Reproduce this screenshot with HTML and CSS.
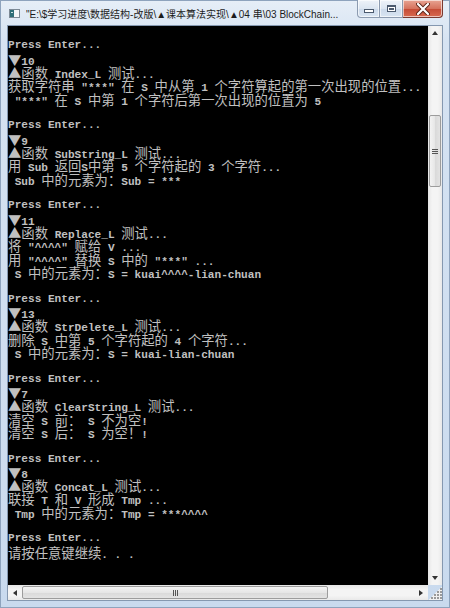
FILE: index.html
```html
<!DOCTYPE html>
<html lang="zh-CN">
  <head>
    <meta charset="UTF-8">
    <title>BlockChain</title>
    <link rel="stylesheet" href="styles.css">
  </head>
  <body>
    <div class="window">
      <div class="titlebar">
        <svg class="app-icon" width="11" height="9" viewBox="0 0 11 9">
          <rect x="0.5" y="0.5" width="10" height="8" fill="#f4f6f8" stroke="#7d8a96"/>
          <rect x="1" y="1" width="4" height="7" fill="#2f6f78"/>
          <rect x="2" y="3" width="2" height="1" fill="#cfe3e6"/>
        </svg>
        <span class="title">"E:\$学习进度\数据结构-改版\▲课本算法实现\▲04 串\03 BlockChain...</span>
        <div class="caption-btns">
          <div class="cbtn cbtn--min"><span class="ico-min"></span></div>
          <div class="cbtn cbtn--max"><span class="ico-max"></span></div>
          <div class="cbtn cbtn--close">
            <svg width="14" height="12" viewBox="0 0 14 12">
              <path d="M2 1 L12 11 M12 1 L2 11" stroke="#5a2418" stroke-width="4" stroke-linecap="round"/>
              <path d="M2 1 L12 11 M12 1 L2 11" stroke="#ffffff" stroke-width="2.2" stroke-linecap="round"/>
            </svg>
          </div>
        </div>
      </div>

      <div class="client">
        <div class="console">
          <div class="ln"></div>
          <div class="ln">Press Enter...</div>
          <div class="ln"><span class="w">▼</span>10</div>
          <div class="ln"><span class="w">▲函数</span> Index_L <span class="w">测试</span>...</div>
          <div class="ln"><span class="w">获取字符串</span> "***" <span class="w">在</span> S <span class="w">中从第</span> 1 <span class="w">个字符算起的第一次出现的位置</span>...</div>
          <div class="ln"> "***" <span class="w">在</span> S <span class="w">中第</span> 1 <span class="w">个字符后第一次出现的位置为</span> 5</div>
          <div class="ln"></div>
          <div class="ln">Press Enter...</div>
          <div class="ln"><span class="w">▼</span>9</div>
          <div class="ln"><span class="w">▲函数</span> SubString_L <span class="w">测试</span>...</div>
          <div class="ln"><span class="w">用</span> Sub <span class="w">返回</span>S<span class="w">中第</span> 5 <span class="w">个字符起的</span> 3 <span class="w">个字符</span>...</div>
          <div class="ln"> Sub <span class="w">中的元素为：</span>Sub = ***</div>
          <div class="ln"></div>
          <div class="ln">Press Enter...</div>
          <div class="ln"><span class="w">▼</span>11</div>
          <div class="ln"><span class="w">▲函数</span> Replace_L <span class="w">测试</span>...</div>
          <div class="ln"><span class="w">将</span> "^^^^" <span class="w">赋给</span> V ...</div>
          <div class="ln"><span class="w">用</span> "^^^^" <span class="w">替换</span> S <span class="w">中的</span> "***" ...</div>
          <div class="ln"> S <span class="w">中的元素为：</span>S = kuai^^^^-lian-chuan</div>
          <div class="ln"></div>
          <div class="ln">Press Enter...</div>
          <div class="ln"><span class="w">▼</span>13</div>
          <div class="ln"><span class="w">▲函数</span> StrDelete_L <span class="w">测试</span>...</div>
          <div class="ln"><span class="w">删除</span> S <span class="w">中第</span> 5 <span class="w">个字符起的</span> 4 <span class="w">个字符</span>...</div>
          <div class="ln"> S <span class="w">中的元素为：</span>S = kuai-lian-chuan</div>
          <div class="ln"></div>
          <div class="ln">Press Enter...</div>
          <div class="ln"><span class="w">▼</span>7</div>
          <div class="ln"><span class="w">▲函数</span> ClearString_L <span class="w">测试</span>...</div>
          <div class="ln"><span class="w">清空</span> S <span class="w">前：</span> S <span class="w">不为空</span>!</div>
          <div class="ln"><span class="w">清空</span> S <span class="w">后：</span> S <span class="w">为空！</span>!</div>
          <div class="ln"></div>
          <div class="ln">Press Enter...</div>
          <div class="ln"><span class="w">▼</span>8</div>
          <div class="ln"><span class="w">▲函数</span> Concat_L <span class="w">测试</span>...</div>
          <div class="ln"><span class="w">联接</span> T <span class="w">和</span> V <span class="w">形成</span> Tmp ...</div>
          <div class="ln"> Tmp <span class="w">中的元素为：</span>Tmp = ***^^^^</div>
          <div class="ln"></div>
          <div class="ln">Press Enter...</div>
          <div class="ln"><span class="w">请按任意键继续</span>. . .</div>
        </div>

        <div class="vscroll">
          <div class="sbtn"><span class="arrow arrow--up"></span></div>
          <div class="vtrack">
            <div class="vthumb"><span class="grip-lines"></span></div>
          </div>
          <div class="sbtn"><span class="arrow arrow--down"></span></div>
        </div>

        <div class="hscroll">
          <div class="sbtn"><span class="arrow arrow--left"></span></div>
          <div class="htrack">
            <div class="hthumb"><span class="grip-lines grip-lines--v"></span></div>
          </div>
          <div class="sbtn"><span class="arrow arrow--right"></span></div>
        </div>

        <div class="sizegrip"></div>
      </div>
    </div>
  </body>
</html>
```

FILE: styles.css
```css
body {
  margin: 0;
  background: #dfe8f3;
}

.window {
  box-sizing: border-box;
  width: 450px;
  height: 608px;
  display: flex;
  flex-direction: column;
  border: 1px solid #8ea3bd;
  background: linear-gradient(#e6eef7, #d6e3f2 40px, #c9daee);
}

/* title bar */

.titlebar {
  height: 24px;
  display: flex;
  align-items: center;
  padding: 0 6px 0 8px;
}

.app-icon {
  flex: none;
  margin-top: 1px;
}

.title {
  margin-left: 6px;
  font-family: "Liberation Sans", "Noto Sans CJK SC", sans-serif;
  font-size: 10px;
  color: #1c1c1c;
  white-space: nowrap;
  overflow: hidden;
  flex: 1;
}

.caption-btns {
  display: flex;
  align-self: flex-start;
  margin-top: -1px;
  flex: none;
}

.cbtn {
  box-sizing: border-box;
  height: 18px;
  width: 23px;
  display: flex;
  align-items: center;
  justify-content: center;
  border: 1px solid #8c9bb0;
  border-top: none;
  background: linear-gradient(#eef3f9, #dbe5f1 50%, #cbd9ea 51%, #d9e5f2);
  box-shadow: inset 0 0 0 1px rgba(255, 255, 255, 0.6);
}

.cbtn--min {
  border-bottom-left-radius: 4px;
}

.cbtn--max {
  border-left: none;
}

.cbtn--close {
  width: 40px;
  border-left: none;
  border-color: #7a3a30;
  border-bottom-right-radius: 4px;
  background: linear-gradient(#e8a493, #d6735e 50%, #c44a34 51%, #d8694f);
}

.ico-min {
  width: 8px;
  height: 2px;
  margin-top: 4px;
  border: 1px solid #4b5a6e;
  background: #fff;
}

.ico-max {
  box-sizing: border-box;
  width: 9px;
  height: 7px;
  border: 1px solid #4b5a6e;
  border-top-width: 2px;
  background: #fff;
  box-shadow: inset 0 0 0 1px #fff, inset 0 0 0 2px #4b5a6e;
}

/* client area */

.client {
  margin: 0 6px 6px 6px;
  border: 1px solid #8598b0;
  display: grid;
  grid-template-columns: 420px 14px;
  grid-template-rows: 559px 15px;
}

.console {
  background: #000;
  color: #c0c0c0;
  font-family: "Liberation Mono", monospace;
  font-weight: bold;
  font-size: 11.1px;
  overflow: hidden;
}

.ln {
  height: 13.333px;
  line-height: 13.333px;
  white-space: pre;
}

.w {
  font-family: "Noto Sans CJK SC", sans-serif;
  font-weight: normal;
  font-size: 13.333px;
}

/* scrollbars */

.vscroll,
.hscroll {
  display: flex;
  background: linear-gradient(to right, #e6e6e6, #f4f4f4 30%, #f4f4f4 70%, #e9e9e9);
}

.vscroll {
  flex-direction: column;
}

.hscroll {
  background: linear-gradient(#e6e6e6, #f4f4f4 30%, #f4f4f4 70%, #e9e9e9);
}

.sbtn {
  flex: none;
  width: 14px;
  height: 14px;
  display: flex;
  align-items: center;
  justify-content: center;
}

.hscroll .sbtn {
  height: 15px;
}

.vtrack {
  flex: 1;
  padding-top: 75px;
}

.htrack {
  flex: 1;
  display: flex;
}

.vthumb,
.hthumb {
  box-sizing: border-box;
  border: 1px solid #9c9c9c;
  border-radius: 2px;
  display: flex;
  align-items: center;
  justify-content: center;
}

.vthumb {
  height: 72px;
  margin: 0 1px;
  background: linear-gradient(to right, #f3f3f3, #e6e6e6 50%, #d9d9d9 51%, #e3e3e3);
}

.hthumb {
  width: 306px;
  margin: 1px 0;
  background: linear-gradient(#f3f3f3, #e6e6e6 50%, #d9d9d9 51%, #e3e3e3);
}

.grip-lines {
  width: 6px;
  height: 5px;
  background: repeating-linear-gradient(#555 0 1px, transparent 1px 2px);
}

.grip-lines--v {
  width: 5px;
  height: 6px;
  background: repeating-linear-gradient(to right, #555 0 1px, transparent 1px 2px);
}

.arrow {
  width: 0;
  height: 0;
  border: 3px solid transparent;
}

.arrow--up {
  border-bottom: 4px solid #333;
  border-top-width: 0;
}

.arrow--down {
  border-top: 4px solid #333;
  border-bottom-width: 0;
}

.arrow--left {
  border-right: 4px solid #333;
  border-left-width: 0;
}

.arrow--right {
  border-left: 4px solid #333;
  border-right-width: 0;
}

.sizegrip {
  background:
    radial-gradient(circle at 1px 1px, #9a9a9a 1px, transparent 1px) 0 0 / 3px 3px,
    #f0f0f0;
  -webkit-mask: linear-gradient(135deg, transparent 55%, #000 55%);
  mask: linear-gradient(135deg, transparent 55%, #000 55%);
}
```
